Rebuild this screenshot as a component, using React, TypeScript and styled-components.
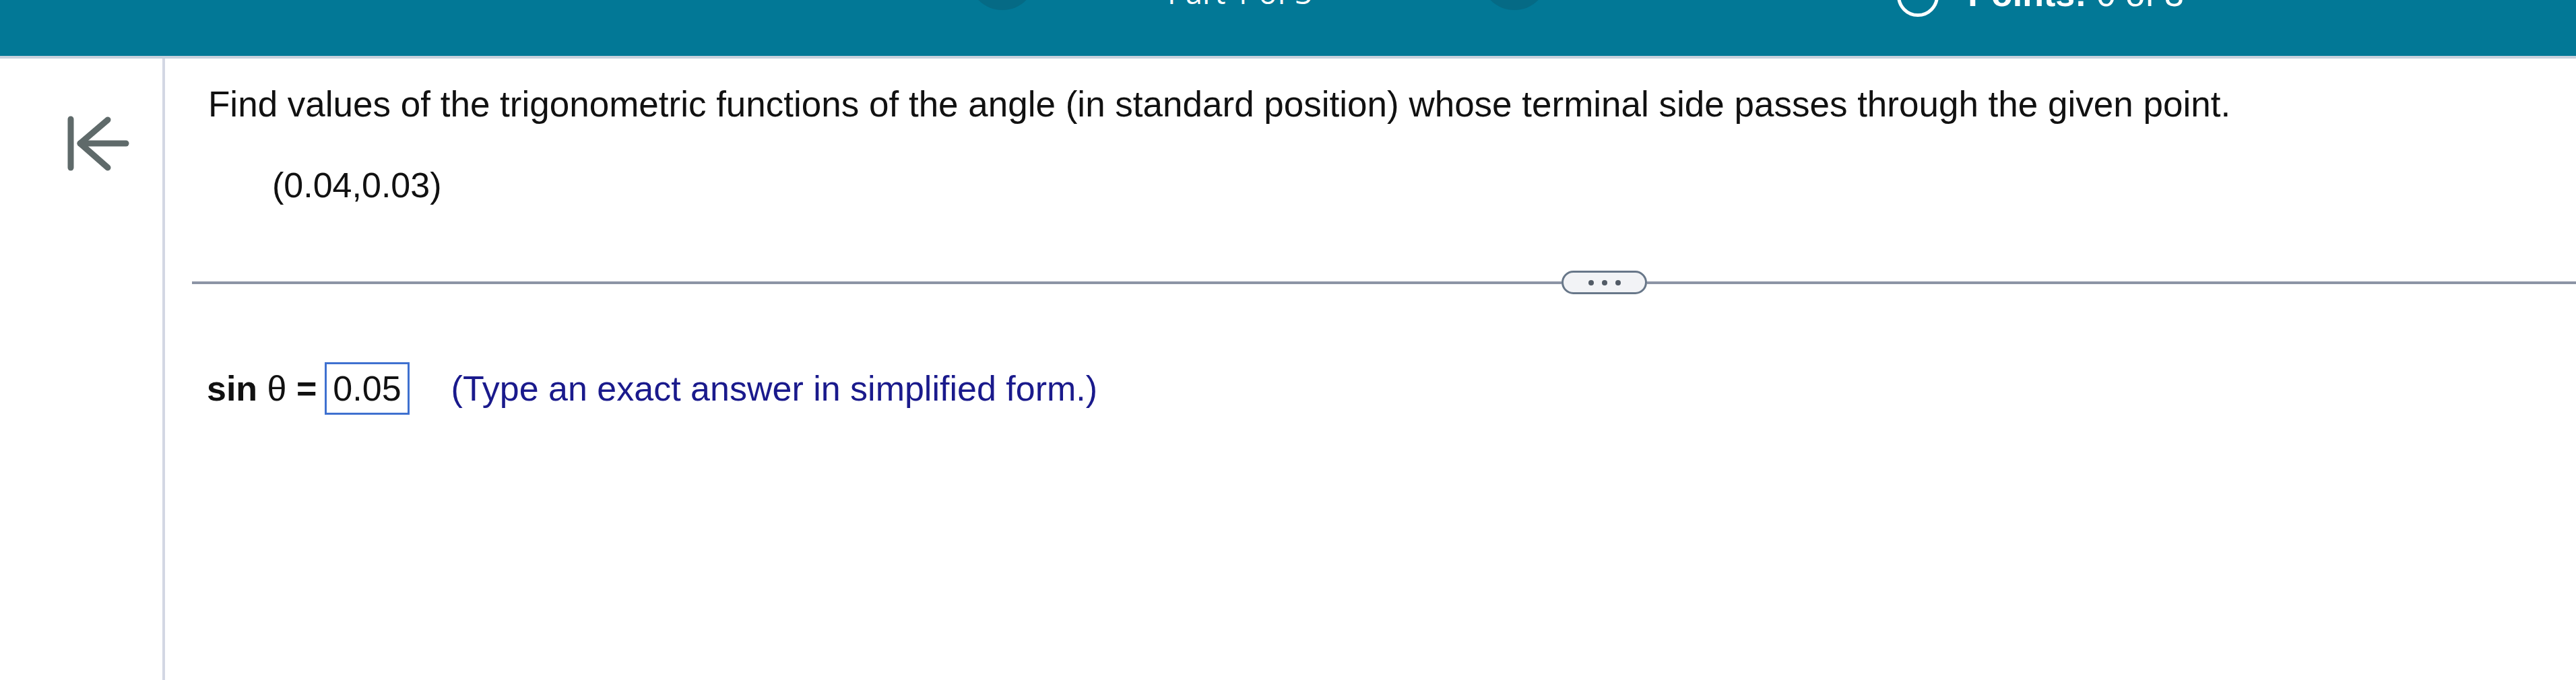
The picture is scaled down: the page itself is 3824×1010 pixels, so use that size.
import React from "react";
import styled, { createGlobalStyle } from "styled-components";

const GlobalStyle = createGlobalStyle`
  html, body {
    margin: 0;
    padding: 0;
    background: #ffffff;
  }
  body {
    font-family: "Liberation Sans", Arial, Helvetica, sans-serif;
    color: #111111;
    overflow: hidden;
  }
`;

const Page = styled.div`
  width: 3824px;
  height: 1010px;
  display: flex;
  flex-direction: column;
  overflow: hidden;
`;

const Header = styled.header`
  height: 83px;
  flex: 0 0 auto;
  background: #027896;
  border-bottom: 4px solid #c7d1dd;
  overflow: hidden;
`;

const HeaderRow = styled.div`
  display: flex;
  align-items: flex-start;
  padding-left: 1438px;
`;

const StepDot = styled.div<{ $gap?: number }>`
  width: 100px;
  height: 100px;
  margin-left: ${(p) => p.$gap ?? 0}px;
  margin-top: -85px;
  border-radius: 50%;
  background: #056a85;
  flex: 0 0 auto;
`;

const PartLabel = styled.div`
  margin-left: 195px;
  margin-top: -34px;
  font-family: "Open Sans", "Liberation Sans", sans-serif;
  font-size: 45px;
  line-height: 45px;
  color: #ffffff;
  white-space: nowrap;
`;

const ScoreRing = styled.div`
  width: 52px;
  height: 52px;
  margin-left: 518px;
  margin-top: -37px;
  border: 5px solid #ffffff;
  border-radius: 50%;
  flex: 0 0 auto;
`;

const Points = styled.div`
  margin-left: 43px;
  margin-top: -36px;
  font-size: 52px;
  line-height: 54px;
  color: #ffffff;
  white-space: nowrap;

  b {
    font-weight: 700;
  }
`;

const Main = styled.main`
  flex: 1 1 auto;
  display: flex;
`;

const Sidebar = styled.aside`
  width: 245px;
  flex: 0 0 auto;
  box-sizing: border-box;
  border-right: 4px solid #d3d7e3;
  padding-top: 85px;
  padding-left: 100px;
`;

const Content = styled.section`
  flex: 1 1 auto;
  padding-left: 40px;
  display: flex;
  flex-direction: column;
`;

const Prompt = styled.p`
  margin: 38px 0 0 24px;
  font-size: 53px;
  line-height: 60px;
  white-space: nowrap;
`;

const PointText = styled.p`
  margin: 60px 0 0 119px;
  font-size: 52px;
  line-height: 60px;
`;

const DividerRow = styled.div`
  margin-top: 97px;
  height: 35px;
  display: flex;
  align-items: center;
`;

const Rule = styled.div<{ $width?: number }>`
  height: 4px;
  background: #8c94a5;
  flex: ${(p) => (p.$width ? `0 0 ${p.$width}px` : "1 1 auto")};
`;

const MoreButton = styled.button`
  flex: 0 0 auto;
  width: 127px;
  height: 35px;
  box-sizing: border-box;
  border: 3px solid #687789;
  border-radius: 18px;
  background: #f2f3f6;
  display: flex;
  align-items: center;
  justify-content: center;
  gap: 12px;
  padding: 0;
`;

const Dot = styled.span`
  width: 8px;
  height: 8px;
  border-radius: 50%;
  background: #525b66;
`;

const AnswerRow = styled.div`
  margin: 101px 0 0 22px;
  display: flex;
  align-items: baseline;
  font-size: 52px;
  line-height: 60px;
  white-space: nowrap;
`;

const Label = styled.span`
  b {
    font-weight: 700;
  }
`;

const AnswerBox = styled.span`
  margin-left: 12px;
  padding: 6px 9px;
  border: 3px solid #3f71d0;
  color: #111111;
`;

const Hint = styled.span`
  margin-left: 62px;
  color: #1a1a8c;
`;

function CollapseIcon() {
  return (
    <svg width="92" height="84" viewBox="0 0 92 84" fill="none">
      <g stroke="#5f6a6a" strokeWidth="9" strokeLinecap="round" strokeLinejoin="round">
        <line x1="5" y1="5" x2="5" y2="77" />
        <polyline points="60,6 19,41 60,77" />
        <line x1="19" y1="41" x2="87" y2="41" />
      </g>
    </svg>
  );
}

export default function App() {
  return (
    <>
      <GlobalStyle />
      <Page>
        <Header>
          <HeaderRow>
            <StepDot />
            <PartLabel>Part 1 of 3</PartLabel>
            <StepDot $gap={250} />
            <ScoreRing />
            <Points>
              <b>Points:</b> 0 of 3
            </Points>
          </HeaderRow>
        </Header>
        <Main>
          <Sidebar>
            <CollapseIcon />
          </Sidebar>
          <Content>
            <Prompt>
              Find values of the trigonometric functions of the angle (in standard position) whose terminal side passes
              through the given point.
            </Prompt>
            <PointText>(0.04,0.03)</PointText>
            <DividerRow>
              <Rule $width={2033} />
              <MoreButton aria-label="More">
                <Dot />
                <Dot />
                <Dot />
              </MoreButton>
              <Rule />
            </DividerRow>
            <AnswerRow>
              <Label>
                <b>sin</b> θ <b>=</b>
              </Label>
              <AnswerBox>0.05</AnswerBox>
              <Hint>(Type an exact answer in simplified form.)</Hint>
            </AnswerRow>
          </Content>
        </Main>
      </Page>
    </>
  );
}
